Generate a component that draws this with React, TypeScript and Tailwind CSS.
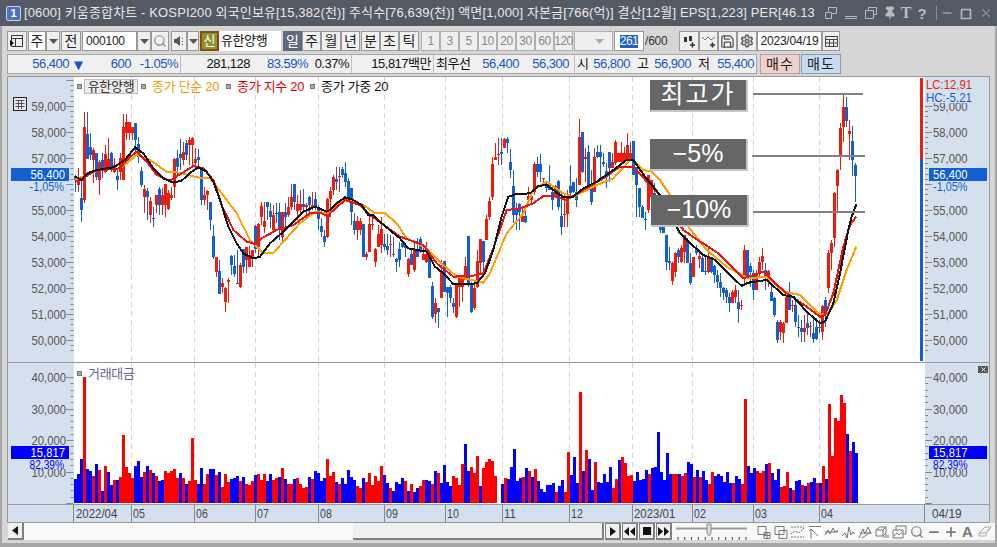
import type { ReactNode } from 'react'
import { Search, Save, Settings, Minus, Plus, Pin, X } from 'lucide-react'
import { twMerge } from 'tailwind-merge'

const BLUE = '#115fd0'
const RED = '#ee1c0c'
const PANEL = '#d5e0ee'

// candles read off the picture: wick top, body top, body bottom, wick bottom
const CANDLES_A =
  'b255,258,270,305 r235,270,285,305 b270,325,360,395 r65,110,330,340 b65,132,208,208 b130,170,195,210 r175,180,210,280 b190,190,260,270 r210,215,270,315 b190,210,240,265 r165,192,245,250 r145,208,240,240 b185,190,235,245 r205,225,245,250 b240,258,270,300 r190,205,245,270 r72,110,270,270 r72,95,130,150 r95,95,130,150 r110,110,130,150 b100,100,150,190 b140,163,200,220 b230,242,285,290 r285,298,320,370 b295,303,320,390 r320,333,375,400 b350,385,388,410 r315,315,345,370 b290,298,345,375 r295,315,345,375 r283,283,345,380 r300,310,358,360 r290,315,325,330 r205,208,290,325 b180,205,230,260 b148,192,205,240 r155,185,210,225 b150,160,195,210 r140,150,165,225 r140,145,165,225 r175,208,220,225 b178,200,210,230 b230,232,330,345 r290,315,330,345 r300,303,315,360 b335,335,390,420 b405,438,500,508 r500,500,545,560 b510,543,612,612 r565,580,590,610 r590,595,635,665 r565,570,575,640 b495,497,525,555 b495,528,552,560 b480,578,580,580 r520,525,590,595 b478,478,530,550 r470,470,510,550 r468,495,530,530 r480,480,500,530 b405,408,478,490 r400,403,470,500 r335,348,380,405 r335,393,410,430 b335,335,350,390 b340,362,380,415 r345,375,420,430 b340,368,372,400 b340,365,420,450 r365,365,440,455 b340,365,380,420 r320,350,375,380 r283,320,350,360 b282,282,335,360 r315,343,363,390 r300,343,360,370 b298,343,352,365 r340,345,352,390 b318,320,345,365 r305,345,352,360 b305,328,350,360 b345,350,388,420 b385,408,425,440 b420,438,455,470 r325,328,440,445'
const CANDLES_B =
  'r232,242,268,320 r195,200,240,255 b170,207,215,240 r170,198,201,245 b170,178,195,205 b155,190,215,230 b205,213,265,270 b235,235,305,345 b310,333,360,375 r318,333,360,390 r325,333,360,375 b342,342,440,440 r425,432,440,450 r315,342,425,425 r315,342,345,360 r415,417,455,470 r345,372,410,410 r320,357,405,430 b372,402,410,420 b372,408,420,435 r375,402,405,440 b380,432,435,440 b445,447,455,485 b395,417,450,470 b395,398,410,415 b405,405,415,440 r445,447,492,500 b420,432,465,465 r400,420,480,485 b385,418,440,440 b380,388,425,430 r410,432,450,450 r395,432,455,460 b420,423,505,505 b515,528,620,628 r565,580,612,640 b595,595,605,655 r450,485,565,565 b452,452,545,545 b530,530,550,620 b525,530,565,580 b565,578,590,610 r520,520,620,625 r495,497,530,590 r495,497,530,575 r440,468,510,510 b378,378,520,530 b515,518,605,610 r515,535,595,600 r420,452,530,535 r388,388,458,490 b392,392,455,480 r315,327,390,390 r260,272,322,330 r140,163,260,270 r100,140,150,150 r85,131,134,165 b85,125,133,165 r85,87,113,115 b80,87,98,130 b118,155,180,205 b180,228,315,340 b280,300,315,360 b280,282,305,360 r290,318,335,335 b290,318,335,340 r230,258,270,280 r245,258,270,285 r155,162,245,255 b140,162,185,200 b132,162,185,215 r205,205,207,220 b220,222,235,245 b165,222,240,240 b225,245,270,300 r225,228,260,260 b210,212,290,300 b250,318,350,375 r250,312,314,350 r240,265,313,350 b165,228,250,255 b215,215,245,250 b205,245,270,290 r28,80,225,225 b65,65,185,190 r115,142,148,215 b105,127,225,230 b180,225,275,285 r115,142,245,245 b105,127,142,145 b105,127,142,205 b130,155,163,170 b160,183,195,235 b125,127,175,215 r130,155,175,175 r90,97,158,165 r130,130,155,155 r95,130,155,160 r110,130,155,160 r70,105,150,150 r95,130,150,150 b93,93,195,195 b170,170,225,320 b235,235,290,320 b285,290,323,325 b305,328,330,360 r195,195,300,310'
const CANDLES_C =
  'r330,330,380,380 b340,370,420,440 b400,420,460,470 b430,440,480,490 b440,470,488,490 b495,495,575,600 b530,573,580,600 r575,578,632,645 r545,548,605,620 b535,540,560,580 r525,535,575,580 r495,495,545,580 b505,510,578,580 b550,578,640,645 r560,560,620,620 b525,535,550,555 r540,558,566,595 b555,565,605,605 b560,604,606,615 r530,558,605,610 b560,560,605,610 b585,588,615,640 b600,615,635,655 b610,635,655,680 b650,655,670,690 b655,660,680,700 b670,680,700,725 r660,665,700,700 r645,660,680,700 b660,695,718,760 r690,705,708,720 r525,540,625,640 b540,540,625,625 b580,588,605,650 b600,610,660,690 r600,610,660,660 r560,575,610,625 r535,558,575,600 b580,600,625,660 r600,602,625,650 b640,665,692,690 b680,685,735,740 b750,755,810,820 r750,755,785,810 r755,760,790,820 r680,682,760,760 b635,672,720,720 r690,705,708,725 b680,705,755,770 b735,770,772,800 b750,775,785,815 r735,775,785,815 b730,760,775,795 r755,768,770,800 b745,790,808,820 b745,770,808,810 b750,770,775,790 r705,708,785,810 b680,690,730,770 r540,550,655,670 r510,520,550,600 r365,370,505,530 r298,300,348,425 r160,175,255,300 r72,112,170,215 b80,112,152,170 r150,183,192,270 b168,213,270,318 b278,285,318,395'

function parseCandles(s: string, dy: number) {
  return s.split(' ').map((t) => {
    const [wt, bt, bb, wb] = t.slice(1).split(',').map((n) => dy + Number(n) / 3)
    return { up: t[0] === 'r', wt, bt, bb, wb }
  })
}

const candles = [
  ...parseCandles(CANDLES_A, 90),
  ...parseCandles(CANDLES_B, 110),
  ...parseCandles(CANDLES_C, 70),
]

// volume bars: top of the bar in 3x crop px, negative = blue
const VOL_A = [
  -357, -342, -297, 50, -327, -333, 348, -312, 330, -393, 318, -336, -375, 360, -360, 351, 225, 321, 339, 354, -318, -303, -351, 336, -318, 330, -339, 348, -363, -360, 333, 339, 333, 327, 354, -339, 354, -372, 363, 234, 360, -372, -324, 372, 342, -327, -327, 345, -336, 381, 342, 366, -357, -354, -348, 363, -351, 372, 375, 363, -345, 342, 360, 342, -363, -342, 360, 354, -351, 324, -357, 372, 372, -357, 354, 372, 384, 381, -351, 357, -333, -339, -363, -354, 297, 348, 336, -366, 372, -354, -372, -330, -351, -360, 378, 384, -354, 366, 339, 375, 348, 363, 318, -345, -369, 384, -393, -366, -372, -354, 363, -393, 372, -396, -384, 378, 360, -360, -363, 372, -333, 339, -369, -315, -366, -378, 348, 354, 375, 312, -252, -333, 321, 339, 288, -378, 324, 306, 297, 303, 348,
]
const VOL_B = [
  -372, 354, -357, -321, -267, -363, -354, 351, -324, 333, -351, 327, -363, -387, -396, -375, -375, -369, 396, -378, -360, 396, 276, -345, -291, -369, 96, -333, 270, -297, -390, 306, -366, -369, -342, -366, -321, 384, 357, -300, 291, 309, 348, 345, -363, -336, -360, -357, -330, 342, -324, -321, -216, -336, -360, -279, -342, 342, 342, -342, 348, 339, -306, -312, 351, -330, 351, -333, -360, 372, 336, -348, -342, -348, -366, -336, -369, 369, -348, -357, 372, 117, -318, -339, -324, 333, 339, 333, -312, 309, -339, -360, -327, 381, 378, 336, -384, 390, -363, -360, 375, -378, 369, -366, -354, 369, -369, 318, -357, 132, 288, 174, 183, 105, 129, -222, 273, -246, -279,
]

type P = [number, number]
const pts = (list: number[], x0: number, y0: number): P[] => {
  const out: P[] = []
  for (let i = 0; i < list.length; i += 2) out.push([x0 + list[i] / 3, y0 + list[i + 1] / 3])
  return out
}
const line = (...parts: P[][]) =>
  parts
    .flat()
    .map((p) => p.join(','))
    .join(' ')

const MA_BLACK = line(
  pts([226, 260, 245, 270, 262, 250, 290, 240, 340, 232, 375, 210, 405, 172, 430, 190, 460, 235, 490, 265, 520, 278, 545, 272, 575, 245, 595, 232, 620, 245, 640, 275, 660, 330, 685, 410, 710, 460, 730, 490, 760, 505, 780, 500, 810, 460, 850, 425, 880, 395, 910, 365, 945, 350, 980, 365], 0, 90),
  pts([30, 300, 50, 280, 75, 262, 100, 270, 125, 285, 145, 315, 160, 315, 185, 340, 215, 365, 240, 385, 265, 415, 320, 425, 345, 470, 370, 490, 400, 522, 440, 522, 470, 520, 495, 490, 520, 420, 545, 320, 565, 260, 590, 252, 630, 250, 655, 228, 680, 225, 730, 262, 760, 260, 790, 235, 830, 215, 880, 180, 920, 150], 320, 110),
  pts([40, 270, 75, 320, 120, 375, 180, 490, 200, 510, 250, 555, 285, 570, 330, 615, 365, 648, 385, 638, 440, 630, 490, 675, 520, 680, 560, 725, 600, 760, 615, 755, 640, 700, 660, 610, 685, 480, 695, 440, 709, 403], 620, 70),
)
const MA_RED = line(
  pts([226, 275, 250, 265, 280, 245, 310, 240, 360, 235, 385, 205, 410, 185, 440, 215, 470, 255, 510, 272, 545, 250, 580, 228, 610, 235, 640, 270, 665, 345, 700, 420, 740, 455, 765, 462, 785, 445, 830, 420, 880, 405, 930, 370, 960, 368, 985, 380], 0, 90),
  pts([30, 310, 75, 270, 120, 285, 150, 315, 185, 340, 240, 380, 310, 405, 350, 460, 400, 500, 460, 497, 490, 490, 520, 415, 560, 300, 600, 295, 640, 280, 670, 258, 700, 258, 740, 270, 790, 240, 850, 205, 900, 170], 320, 110),
  pts([40, 290, 85, 340, 120, 375, 190, 480, 225, 505, 265, 530, 295, 550, 340, 595, 370, 625, 430, 605, 460, 635, 500, 670, 560, 710, 600, 740, 615, 735, 640, 670, 670, 530, 690, 465, 709, 440], 620, 70),
)
const MA_ORANGE = line(
  pts([226, 268, 300, 240, 360, 235, 410, 195, 450, 210, 500, 245, 540, 248, 590, 262, 630, 265, 665, 310, 710, 370, 750, 450, 790, 490, 820, 490, 850, 455, 900, 400, 945, 365, 985, 370], 0, 90),
  pts([30, 305, 75, 265, 130, 285, 165, 310, 195, 310, 230, 340, 260, 385, 320, 415, 370, 465, 410, 500, 490, 518, 510, 490, 560, 370, 610, 310, 640, 240, 680, 215, 730, 250, 760, 260, 830, 225, 880, 205, 930, 150], 320, 110),
  pts([40, 270, 70, 300, 95, 305, 120, 330, 150, 375, 205, 470, 260, 540, 320, 590, 385, 625, 440, 620, 490, 665, 540, 675, 600, 735, 625, 730, 650, 690, 680, 600, 709, 530], 620, 70),
)

const GRID_X = [131, 194, 255, 318, 384, 445, 502, 569, 632, 692, 753, 819]

function AxisTicks({ side, from, to, step, major }: { side: 'l' | 'r'; from: number; to: number; step: number; major: number }) {
  const out: ReactNode[] = []
  let n = 0
  for (let y = from; y <= to + 0.5; y += step) {
    const isMajor = n % major === 0
    const len = isMajor ? 7 : 3
    const x1 = side === 'l' ? 73.5 - len : 925
    const x2 = side === 'l' ? 73.5 : 925 + len
    out.push(<line key={n} x1={x1} x2={x2} y1={Math.round(y) + 0.5} y2={Math.round(y) + 0.5} stroke="#888" />)
    n++
  }
  return <>{out}</>
}

function AxisLabel({ x, y, text, anchor = 'end', fill = '#555' }: { x: number; y: number; text: string; anchor?: 'end' | 'start'; fill?: string }) {
  return (
    <text x={x} y={y + 5} textAnchor={anchor} fontSize="13.5" fill={fill} textLength={text.length * 5.75} lengthAdjust="spacingAndGlyphs">
      {text}
    </text>
  )
}

const PRICES = ['59,000', '58,000', '57,000', '56,000', '55,000', '54,000', '53,000', '52,000', '51,000', '50,000']
const VOLS: [string, number][] = [['40,000', 377], ['30,000', 409], ['20,000', 440], ['10,000', 472]]

function LeftPrice() {
  return (
    <svg className="block h-[285px] w-[66px]" viewBox="8 77 66 285">
      <AxisTicks side="l" from={80} to={352} step={5.2} major={5} />
      {PRICES.map((p, i) =>
        p === '56,000' ? null : <AxisLabel key={p} x={66} y={106 + i * 26} text={p} />,
      )}
      <rect x="13.5" y="97.5" width="13" height="13" fill="#e8e8e8" stroke="#222" />
      <path d="M15.5 100.5h9M15.5 103.5h9M15.5 106.5h9M18.5 100v9M21.5 100v9" stroke="#555" />
      <rect x="11" y="168" width="58" height="13" fill={BLUE} />
      <AxisLabel x={65} y={174} text="56,400" fill="#fff" />
      <AxisLabel x={64} y={186} text="-1,05%" fill={BLUE} />
    </svg>
  )
}

function RightPrice() {
  return (
    <svg className="block h-[285px] w-[64px]" viewBox="925 77 64 285">
      <AxisTicks side="r" from={80} to={352} step={5.2} major={5} />
      {PRICES.map((p, i) =>
        p === '56,000' ? null : <AxisLabel key={p} x={933} y={106 + i * 26} text={p} anchor="start" />,
      )}
      <rect x="925" y="77" width="64" height="26" fill={PANEL} />
      <AxisLabel x={926} y={84} text="LC:12,91" anchor="start" fill={RED} />
      <AxisLabel x={926} y={97} text="HC:-5,21" anchor="start" fill={BLUE} />
      <rect x="929" y="168" width="58" height="13" fill={BLUE} />
      <AxisLabel x={933} y={174} text="56,400" anchor="start" fill="#fff" />
      <AxisLabel x={933} y={186} text="-1,05%" anchor="start" fill={BLUE} />
    </svg>
  )
}

function LeftVolume() {
  return (
    <svg className="block h-[141px] w-[66px]" viewBox="8 363 66 141">
      <AxisTicks side="l" from={377} to={503} step={6.3} major={5} />
      {VOLS.map(([t, y]) => (
        <AxisLabel key={t} x={66} y={y} text={t} />
      ))}
      <rect x="11" y="446" width="58" height="13" fill="#0000ff" />
      <rect x="26" y="459" width="42" height="10" fill={PANEL} />
      <AxisLabel x={65} y={452} text="15,817" fill="#fff" />
      <AxisLabel x={64} y={464} text="82,39%" fill="#0000ff" />
    </svg>
  )
}

function RightVolume() {
  return (
    <svg className="block h-[141px] w-[64px]" viewBox="925 363 64 141">
      <AxisTicks side="r" from={377} to={503} step={6.3} major={5} />
      {VOLS.map(([t, y]) => (
        <AxisLabel key={t} x={933} y={y} text={t} anchor="start" />
      ))}
      <rect x="929" y="446" width="58" height="13" fill="#0000ff" />
      <rect x="932" y="459" width="42" height="10" fill={PANEL} />
      <AxisLabel x={933} y={452} text="15,817" anchor="start" fill="#fff" />
      <AxisLabel x={933} y={464} text="82,39%" anchor="start" fill="#0000ff" />
    </svg>
  )
}

function PricePlot() {
  return (
    <svg className="block h-[285px] w-[851px]" viewBox="74 77 851 285" shapeRendering="crispEdges">
      {GRID_X.map((x) => (
        <line key={x} x1={x + 0.5} x2={x + 0.5} y1="77" y2="362" stroke="#d4d4d4" strokeDasharray="5 4" />
      ))}
      {candles.map((c, i) => {
        const x = 74 + 3 * i
        const fill = c.up ? RED : BLUE
        return (
          <g key={i} fill={fill}>
            <rect x={x + 1} y={c.wt} width="1" height={Math.max(1, c.wb - c.wt)} />
            <rect x={x} y={c.bt} width="3" height={Math.max(1, c.bb - c.bt)} />
          </g>
        )
      })}
      <g fill="none" strokeWidth="2" strokeLinejoin="round">
        <polyline points={MA_ORANGE} stroke="#ffa000" />
        <polyline points={MA_RED} stroke="#f01010" />
        <polyline points={MA_BLACK} stroke="#111" />
      </g>
      <g stroke="#808080" strokeWidth="2">
        <line x1="753" x2="863" y1="94" y2="94" />
        <line x1="752" x2="865" y1="156" y2="156" />
        <line x1="753" x2="865" y1="212" y2="212" />
      </g>
      <rect x="920" y="78" width="3" height="81" fill={RED} />
      <rect x="920" y="159" width="3" height="202" fill={BLUE} />
    </svg>
  )
}

function VolumePlot() {
  const bars = [
    ...VOL_A.map((v, i) => ({ v, x: 74 + 3 * i })),
    ...VOL_B.map((v, i) => ({ v, x: 858 - 3 * (VOL_B.length - i) })),
  ]
  return (
    <svg className="block h-[141px] w-[851px]" viewBox="74 363 851 141" shapeRendering="crispEdges">
      {GRID_X.map((x) => (
        <line key={x} x1={x + 0.5} x2={x + 0.5} y1="363" y2="504" stroke="#d4d4d4" strokeDasharray="5 4" />
      ))}
      {bars.map(({ v, x }, i) => {
        const top = 360 + Math.abs(v) / 3
        return <rect key={i} x={x} y={top} width="3" height={503 - top} fill={v > 0 ? '#ff0000' : '#0000ff'} />
      })}
    </svg>
  )
}

const TIME_LABELS: [string, number][] = [
  ['2022/04', 76], ['05', 133], ['06', 196], ['07', 257], ['08', 320], ['09', 386], ['10', 447], ['11', 504], ['12', 571],
  ['2023/01', 634], ['02', 694], ['03', 755], ['04', 821], ['04/19', 932],
]

function TimeAxis() {
  return (
    <svg className="block h-[17px] w-[981px]" viewBox="8 505 981 17">
      {[73, 131, 194, 255, 318, 384, 445, 502, 569, 632, 692, 753, 819, 924].map((x) => (
        <line key={x} x1={x + 0.5} x2={x + 0.5} y1="505" y2="522" stroke="#888" />
      ))}
      {TIME_LABELS.map(([t, x]) => (
        <text key={x} x={x} y="518" fontSize="13.5" fill="#444" textLength={t.length * 5.9} lengthAdjust="spacingAndGlyphs">
          {t}
        </text>
      ))}
    </svg>
  )
}

function Legend() {
  const dot = 'size-[5px] shrink-0 border border-[#777] bg-[#aaa]'
  return (
    <div className="absolute left-[3px] top-[2px] flex h-[15px] items-center whitespace-nowrap text-[13px] tracking-[-0.3px]">
      <span className={dot} />
      <span className="ml-[2px] flex h-[15px] w-[54px] items-center justify-center border border-[#bbb] bg-[#ececec] text-[#333]">유한양행</span>
      <span className={dot + ' ml-[3px]'} />
      <span className="ml-[6px] w-[74px] text-[#f59a00]">종가 단순 20</span>
      <span className={dot} />
      <span className="ml-[6px] w-[73px] text-[#e80000]">종가 지수 20</span>
      <span className={dot} />
      <span className="ml-[6px] text-[#111]">종가 가중 20</span>
    </div>
  )
}

function Marker({ top, left, children }: { top: string; left: string; children: ReactNode }) {
  return (
    <div className={top + ' ' + left + ' absolute flex h-[32px] w-[98px] items-center justify-center border-b-2 border-r-2 border-[#c4c4c4] bg-[#666] text-[25px] text-white'}>
      {children}
    </div>
  )
}

function Tri({ disabled }: { disabled?: boolean }) {
  return (
    <svg width="9" height="5" viewBox="0 0 9 5">
      <path d="M0 0h9L4.5 5z" fill={disabled ? '#aaa' : '#555'} />
    </svg>
  )
}

const btn = (extra: string) =>
  twMerge('flex h-[20px] shrink-0 items-center justify-center border border-[#999] bg-[#f0f0f0] text-[#222]', extra)
const off = 'flex h-[20px] w-[19px] items-center justify-center border border-[#b0b0b0] bg-[#efefef] text-[12px] tracking-[-0.5px] text-[#888]'

function TitleBar() {
  return (
    <div className="flex h-[26px] items-center bg-[#535a64] pl-[6px] text-[#e8e8e8]">
      <div className="flex size-[15px] items-center justify-center rounded-[2px] border border-[#c7d4ea] bg-[#4a74b8] text-[11px] font-bold text-white">1</div>
      <div className="ml-[3px] w-[797px] overflow-hidden whitespace-nowrap text-[13px] tracking-[0.14px]">
        [0600] 키움종합차트 - KOSPI200 외국인보유[15,382(천)] 주식수[76,639(천)] 액면[1,000] 자본금[766(억)] 결산[12월] EPS[1,223] PER[46.13
      </div>
      <div className="ml-[3px] flex items-center text-[#b8bcc2]">
        <svg width="14" height="14" viewBox="0 0 14 14" fill="none" stroke="currentColor"><path d="M4.5 5.5v-4h8v6h-5M1.5 6.5h6v6h-6z" /></svg>
        <svg className="ml-[6px]" width="14" height="14" viewBox="0 0 14 14" fill="none" stroke="currentColor"><path d="M1 10.5h12M1 12.5h12" /></svg>
        <svg className="ml-[6px]" width="14" height="14" viewBox="0 0 14 14" fill="none" stroke="currentColor"><path d="M4.5 3.5v-2h8v7h-3M1.5 4.5h8v8h-8z" /></svg>
        <Pin className="ml-[5px]" size={14} fill="currentColor" />
        <span className="ml-[2px] w-[14px] text-center font-['Liberation_Serif',serif] text-[16px] font-bold leading-none">T</span>
        <span className="ml-[3px] w-[12px] text-center text-[15px] font-bold leading-none">?</span>
        <span className="ml-[8px] h-[14px] w-px bg-[#8a8f96]" />
        <Minus className="ml-[3px]" size={14} />
        <svg className="ml-[6px]" width="13" height="13" viewBox="0 0 13 13" fill="none" stroke="currentColor"><path d="M1.5 3v8.5h9V3M1 2.5h10" strokeWidth="1.6" /></svg>
        <X className="ml-[6px] text-[#8a8f96]" size={14} />
      </div>
    </div>
  )
}

function Toolbar() {
  return (
    <div className="ml-[5px] mt-[5px] flex h-[21px] items-start text-[14px]">
      <div className={btn('w-[20px]')}>
        <svg width="16" height="16" viewBox="0 0 16 16" fill="none" stroke="#333"><path d="M2.5 2.5h11v11h-11zM2.5 5.5h11M6.5 5.5v8" /><path d="M1 7l4 3-4 3z" fill="#111" stroke="none" /></svg>
      </div>
      <div className={btn('ml-px w-[18px] bg-white')}>주</div>
      <div className={btn('w-[14px]')}><Tri /></div>
      <div className={btn('ml-px w-[20px]')}>전</div>
      <div className={btn('ml-px w-[55px] justify-start bg-white pl-[3px] text-[12px] tracking-[-0.2px]')}>000100</div>
      <div className={btn('w-[14px]')}><Tri /></div>
      <div className={btn('w-[18px]')}><Search size={14} color="#888" /></div>
      <div className={btn('ml-[2px] w-[16px]')}>
        <svg width="13" height="12" viewBox="0 0 13 12"><path d="M1 4h2l4-3v10L3 8H1z" fill="#555" /><path d="M9 3h1v1H9zM9 6h1v1H9zM9 9h1v1H9z" fill="#555" /></svg>
      </div>
      <div className={btn('w-[12px]')}><Tri /></div>
      <div className="ml-px flex h-[20px] w-[19px] shrink-0 items-center justify-center border-2 border-[#8a4a12] bg-[#8c962c] text-[13px] text-white">신</div>
      <div className="flex h-[20px] w-[62px] shrink-0 items-center bg-white pl-[2px] text-[13px] tracking-[-0.4px] text-[#111]">유한양행</div>
      <div className={btn('ml-[2px] w-[19px] border-[#5f6b7a] bg-[#5f6b7a] text-white')}>일</div>
      <div className={btn('w-[19px]')}>주</div>
      <div className={btn('w-[20px]')}>월</div>
      <div className={btn('w-[19px]')}>년</div>
      <div className={btn('ml-px w-[19px]')}>분</div>
      <div className={btn('w-[19px]')}>초</div>
      <div className={btn('w-[20px]')}>틱</div>
      <div className="w-[2px] shrink-0" />
      {['1', '3', '5', '10', '20', '30', '60', '120'].map((t) => (
        <div key={t} className={off}>{t}</div>
      ))}
      <div className="ml-px flex h-[20px] w-[39px] items-center justify-end border border-[#b0b0b0] bg-[#efefef] pr-[8px]"><Tri disabled /></div>
      <div className={btn('ml-px w-[30px] bg-white text-[12px]')}>
        <span className="bg-[#1e62c8] leading-[13px] tracking-[-0.5px] text-white">261</span>
      </div>
      <span className="flex h-[20px] w-[35px] items-center pl-px text-[12px] tracking-[-0.2px] text-[#333]">/600</span>
      <div className={btn('w-[20px]')}>
        <svg width="14" height="14" viewBox="0 0 14 14"><path d="M2 3h3v5H2zM7 2h3v5H7z" fill="#333" /><path d="M8 11h5M10.5 8.5v5" stroke="#333" strokeWidth="1.6" /></svg>
      </div>
      <div className={btn('w-[19px]')}>
        <svg width="16" height="14" viewBox="0 0 16 14" fill="none"><path d="M1 3l3 3 3-3 3 3 4-3" stroke="#777" /><path d="M9 11h5M11.5 8.5v5" stroke="#333" strokeWidth="1.6" /></svg>
      </div>
      <div className={btn('w-[19px]')}><Save size={15} color="#555" /></div>
      <div className={btn('w-[20px]')}><Settings size={14} color="#666" strokeWidth={3} /></div>
      <div className={btn('w-[65px] bg-white text-[12px] tracking-[-0.2px]')}>2023/04/19</div>
      <div className={btn('w-[18px]')}>
        <svg width="13" height="12" viewBox="0 0 13 12" fill="none" stroke="#444"><path d="M.5 1.5h12v10H.5zM.5 4.5h12M4.5 4.5v7M8.5 4.5v7M.5 8h12" /></svg>
      </div>
    </div>
  )
}

function InfoRow() {
  const num = 'text-right text-[#1155cc]'
  const sep = 'h-full w-px bg-[#c0c0c0]'
  return (
    <div className="ml-[5px] mt-[2px] flex h-[20px] items-center text-[13px] tracking-[-0.5px]">
      <div className="flex h-full w-[750px] items-center border border-[#a8a8a8] bg-[#f0f0f0]">
        <span className={num + ' w-[61px]'}>56,400</span>
        <span className="ml-[2px] w-[12px] text-[15px] leading-none text-[#1155cc]">▼</span>
        <span className={num + ' w-[48px]'}>600</span>
        <span className={num + ' w-[47px]'}>-1.05%</span>
        <span className={sep + ' ml-[2px]'} />
        <span className="w-[69px] text-right text-[#111]">281,128</span>
        <span className={num + ' w-[58px]'}>83.59%</span>
        <span className="w-[41px] text-right text-[#111]">0.37%</span>
        <span className={sep + ' ml-[2px]'} />
        <span className="w-[79px] text-right text-[#111]">15,817백만</span>
        <span className={sep + ' ml-[2px]'} />
        <span className="ml-[2px] w-[36px] text-[#111]">최우선</span>
        <span className={num + ' w-[47px]'}>56,400</span>
        <span className={num + ' w-[50px]'}>56,300</span>
        <span className={sep + ' ml-[5px]'} />
        <span className="ml-[2px] w-[12px] text-[#111]">시</span>
        <span className={num + ' w-[41px]'}>56,800</span>
        <span className="ml-[7px] w-[12px] text-[#111]">고</span>
        <span className={num + ' w-[42px]'}>56,900</span>
        <span className="ml-[7px] w-[12px] text-[#111]">저</span>
        <span className={num + ' w-[44px]'}>55,400</span>
      </div>
      <div className="ml-[3px] flex h-full w-[40px] items-center justify-center border border-[#a8a8a8] bg-[#f3d0cb] text-[14px] tracking-[1px] text-[#222]">매수</div>
      <div className="ml-px flex h-full w-[40px] items-center justify-center border border-[#8a9db0] bg-[#c5dcf2] text-[14px] tracking-[1px] text-[#222]">매도</div>
    </div>
  )
}

function Charts() {
  return (
    <div className="ml-[5px] mt-[2px] w-[983px] border border-[#999]">
      <div className="flex h-[285px]">
        <div className="bg-[#d5e0ee]"><LeftPrice /></div>
        <div className="relative bg-white">
          <PricePlot />
          <Legend />
          <Marker top="top-[3px]" left="left-[576px]"><span className="tracking-[2px]">최고가</span></Marker>
          <Marker top="top-[62px]" left="left-[576px]">−5%</Marker>
          <Marker top="top-[118px]" left="left-[577px]">−10%</Marker>
        </div>
        <div className="bg-[#d5e0ee]"><RightPrice /></div>
      </div>
      <div className="flex h-[142px] border-t border-[#999]">
        <div className="bg-[#d5e0ee]"><LeftVolume /></div>
        <div className="relative bg-white">
          <VolumePlot />
          <div className="absolute left-[3px] top-[1px] flex items-center text-[13px] tracking-[-0.3px] text-[#66668a]">
            <span className="size-[5px] border border-[#777] bg-[#aaa]" />
            <span className="ml-[6px]">거래대금</span>
          </div>
        </div>
        <div className="relative bg-[#d5e0ee]">
          <RightVolume />
          <div className="absolute right-[1px] top-[3px] flex h-[7px] w-[10px] items-center justify-center bg-[#555]">
            <X size={7} color="#fff" strokeWidth={3} />
          </div>
        </div>
      </div>
      <div className="border-t border-[#999] bg-[#d5e0ee]"><TimeAxis /></div>
    </div>
  )
}

function ToolIcon({ children, active }: { children: ReactNode; active?: boolean }) {
  return <div className={(active ? 'bg-white ' : '') + 'flex h-[17px] w-[17px] items-center justify-center text-[#777]'}>{children}</div>
}

function ScrollRow() {
  const raised = 'flex h-[17px] items-center justify-center border-b-2 border-r-2 border-[#808080] bg-[#f0f0f0]'
  return (
    <div className="ml-[6px] flex h-[17px] items-center bg-[#f8f8f8]">
      <div className={raised + ' w-[16px]'}>
        <svg width="6" height="9" viewBox="0 0 6 9"><path d="M6 0v9L0 4.5z" fill="#111" /></svg>
      </div>
      <div className="h-full w-[329px] bg-[#f9f9f9]" />
      <div className={raised + ' w-[251px]'} />
      <div className={raised + ' ml-px w-[16px] border border-[#888]'}>
        <svg width="6" height="9" viewBox="0 0 6 9"><path d="M0 0v9l6-4.5z" fill="#111" /></svg>
      </div>
      <div className={raised + ' ml-px w-[16px] border border-[#888]'}>
        <svg width="11" height="9" viewBox="0 0 11 9"><path d="M5 0v9L0 4.5zM11 0v9L6 4.5z" fill="#111" /></svg>
      </div>
      <div className={raised + ' ml-px w-[16px] border border-[#888]'}>
        <span className="size-[8px] bg-[#111]" />
      </div>
      <div className={raised + ' ml-px w-[16px] border border-[#888]'}>
        <svg width="11" height="9" viewBox="0 0 11 9"><path d="M0 0v9l5-4.5zM6 0v9l5-4.5z" fill="#111" /></svg>
      </div>
      <svg className="ml-[4px] shrink-0" width="72" height="17" viewBox="0 0 72 17">
        <path d="M0 5.5h71" stroke="#999" strokeWidth="2" />
        <path d="M31 1h4v9l-2 3-2-3z" fill="#ddd" stroke="#888" />
        {Array.from({ length: 11 }, (_, i) => (
          <path key={i} d={'M' + (2 + i * 6.8) + ' 14v3'} stroke="#444" />
        ))}
      </svg>
      <div className="ml-[7px] flex items-center">
        <ToolIcon><svg width="14" height="14" viewBox="0 0 14 14" fill="none" stroke="currentColor"><path d="M1 1.5h8v8h-8zM7 7.5h6v6h-6zM10 7.5v6M7 10.5h6" /></svg></ToolIcon>
        <ToolIcon><svg width="14" height="14" viewBox="0 0 14 14" fill="none" stroke="currentColor"><path d="M1 1.5h9v8h-9zM5 5.5h8v8h-8z" /></svg></ToolIcon>
        <ToolIcon><svg width="15" height="14" viewBox="0 0 15 14" fill="none" stroke="currentColor" strokeDasharray="2 1"><path d="M1 2h13M1 12h13M1 9l4-3 4 2 5-5" /></svg></ToolIcon>
        <ToolIcon active><svg width="14" height="14" viewBox="0 0 14 14" fill="none" stroke="currentColor"><path d="M1 1.5h12M3 14V4M3 4l7 7M3 4l-2 2M3 4l2 2" /></svg></ToolIcon>
        <ToolIcon><svg width="15" height="14" viewBox="0 0 15 14" fill="none" stroke="currentColor"><path d="M1 10l3-5 2 4 3-6 2 4 3-2M1 7h13" /></svg></ToolIcon>
        <ToolIcon><svg width="15" height="14" viewBox="0 0 15 14" fill="none" stroke="currentColor"><path d="M1 11l3-3 2 5 2-11 2 8 2-3 2 2" /></svg></ToolIcon>
        <ToolIcon><svg width="15" height="14" viewBox="0 0 15 14" fill="none" stroke="currentColor"><path d="M1 13l4-9 2 5 3-7 3 7M2 8h11M4 13l9-6" /></svg></ToolIcon>
        <ToolIcon><svg width="15" height="14" viewBox="0 0 15 14" fill="none" stroke="currentColor"><path d="M1 5l4-3h6v6l-3 3H1zM1 5h7v6M8 5l3-3M11 9v4M13 10v3M9 11v2" /></svg></ToolIcon>
        <ToolIcon><svg width="15" height="14" viewBox="0 0 15 14" fill="none" stroke="currentColor"><path d="M1 5h10v8H1zM4 5V1h10v8h-3M2 11l3-3 2 2 3-3" /></svg></ToolIcon>
        <ToolIcon><Search size={14} strokeWidth={2} /></ToolIcon>
        <ToolIcon><Minus size={14} strokeWidth={3} /></ToolIcon>
        <ToolIcon><Plus size={14} strokeWidth={3} /></ToolIcon>
        <ToolIcon><span className="text-[15px] font-bold leading-none">A</span></ToolIcon>
        <ToolIcon><svg width="14" height="13" viewBox="0 0 14 13" fill="none" stroke="#aaa"><path d="M1 8l6-6h6l-5 6v3H1zM1 8h7M8 8l5-6" /></svg></ToolIcon>
      </div>
    </div>
  )
}

export default function App() {
  return (
    <div className="flex h-[547px] w-[997px] flex-col overflow-hidden bg-[#d6d6d6] font-['Liberation_Sans','Noto_Sans_CJK_KR',sans-serif]">
      <TitleBar />
      <div className="flex-1 border-x-2 border-b-4 border-[#a6a6a6]">
        <Toolbar />
        <InfoRow />
        <Charts />
        <ScrollRow />
      </div>
    </div>
  )
}
